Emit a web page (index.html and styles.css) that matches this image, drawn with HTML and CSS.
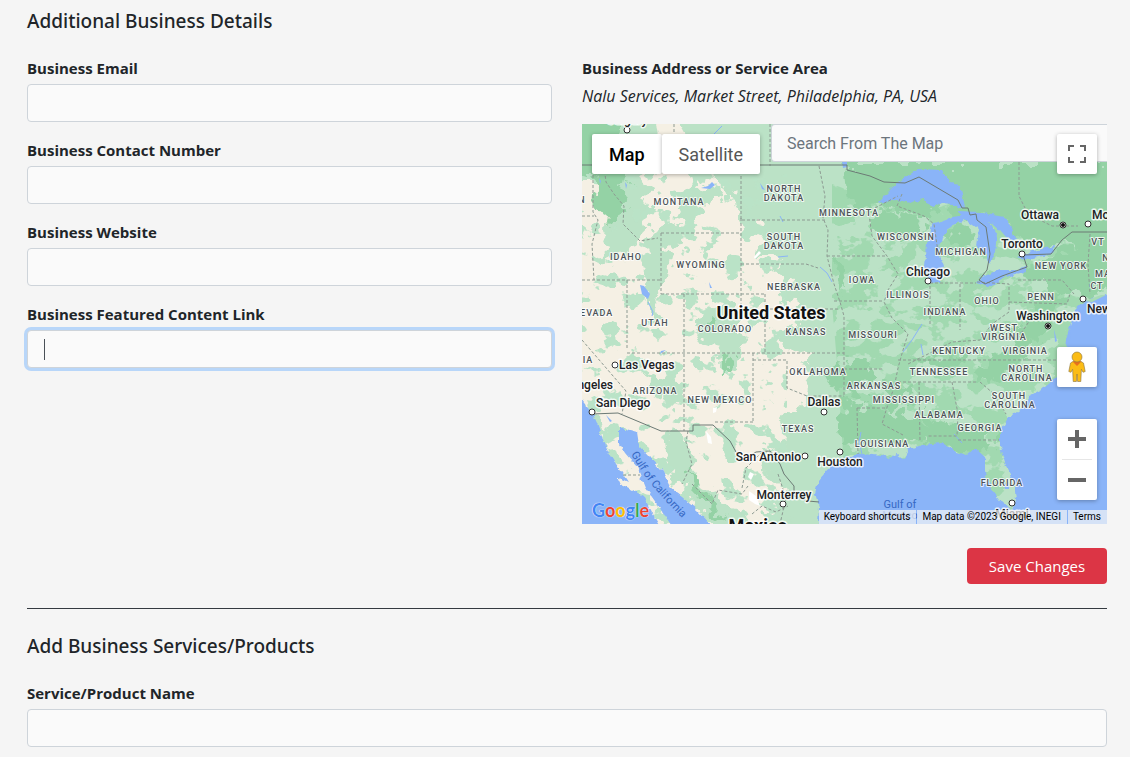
FILE: index.html
```html
<!DOCTYPE html>
<html lang="en">
<head>
    <meta charset="utf-8">
    <meta name="viewport" content="width=device-width, initial-scale=1">
    <title>Business Details</title>
    <link rel="stylesheet" href="styles.css">
</head>
<body>
    <main class="page">
        <form class="details-form">
            <h2>Additional Business Details</h2>

            <div class="columns">
                <div class="column">
                    <div class="form-group">
                        <label for="businessEmail">Business Email</label>
                        <input type="email" id="businessEmail" class="form-control">
                    </div>
                    <div class="form-group">
                        <label for="businessNumber">Business Contact Number</label>
                        <input type="tel" id="businessNumber" class="form-control">
                    </div>
                    <div class="form-group">
                        <label for="businessWebsite">Business Website</label>
                        <input type="url" id="businessWebsite" class="form-control">
                    </div>
                    <div class="form-group">
                        <label for="businessLink">Business Featured Content Link</label>
                        <input type="url" id="businessLink" class="form-control active">
                    </div>
                </div>

                <div class="column">
                    <label for="mapSearch">Business Address or Service Area</label>
                    <p class="address">Nalu Services, Market Street, Philadelphia, PA, USA</p>

                    <div class="map">
                        <svg class="map-canvas" viewBox="0 0 525 400" preserveAspectRatio="xMidYMid slice" role="img" aria-label="Map of the United States">
                            <defs>
                                <filter id="rough" x="-5%" y="-5%" width="110%" height="110%">
                                    <feTurbulence type="fractalNoise" baseFrequency="0.07" numOctaves="3" seed="4"/>
                                    <feDisplacementMap in="SourceGraphic" scale="30" xChannelSelector="R" yChannelSelector="G"/>
                                </filter>
                                <filter id="coast" x="-5%" y="-5%" width="110%" height="110%">
                                    <feTurbulence type="fractalNoise" baseFrequency="0.15" numOctaves="2" seed="8"/>
                                    <feDisplacementMap in="SourceGraphic" scale="6" xChannelSelector="R" yChannelSelector="G"/>
                                </filter>
                                <!-- patches of forest -->
                                <filter id="patches" x="0" y="0" width="100%" height="100%" color-interpolation-filters="sRGB">
                                    <feTurbulence type="fractalNoise" baseFrequency="0.045 0.06" numOctaves="4" seed="11"/>
                                    <feColorMatrix values="0 0 0 0 0.63  0 0 0 0 0.85  0 0 0 0 0.69  24 0 0 0 -11.5"/>
                                    <feComposite in2="SourceGraphic" operator="in"/>
                                </filter>
                                <filter id="scrub" x="0" y="0" width="100%" height="100%" color-interpolation-filters="sRGB">
                                    <feTurbulence type="fractalNoise" baseFrequency="0.05 0.06" numOctaves="4" seed="23"/>
                                    <feColorMatrix values="0 0 0 0 0.73  0 0 0 0 0.89  0 0 0 0 0.78  26 0 0 0 -15"/>
                                    <feComposite in2="SourceGraphic" operator="in"/>
                                </filter>
                            </defs>

                            <rect class="land" width="525" height="400"/>

                            <!-- forest -->
                            <path filter="url(#patches)" d="M250 60L330 90 525 38V400H330L262 345 256 250 250 180Z"/>
                            <g class="forest" filter="url(#rough)">
                                <path d="M262 38H540V128L480 120 450 128 430 100 380 90 350 86 330 92 300 82 268 84Z"/>
                                <path d="M-10 -10H34L32 20 24 44 34 66 40 84 28 104 16 88 14 60-10 44Z"/>
                                <path d="M446 142L485 126 540 108V168L500 172 460 165Z"/>
                                <path d="M280 90L300 84 340 98 338 112 320 110 300 112Z"/>
                                <path d="M366 112L376 100 390 106 394 120 380 126Z"/>
                                <path d="M395 250L440 205 462 170 480 170 470 200 440 232 410 262Z"/>
                                <path d="M252 242L282 236 292 250 270 266 248 260Z"/>
                                <path d="M262 278L285 284 330 292 350 308 340 318 300 320 262 322 256 300Z"/>
                                <path d="M340 285L362 300 400 305 416 316 410 328 380 326 345 318Z"/>
                                <path d="M300 256L330 262 326 282 304 286Z"/>
                                <path d="M330 236L372 226 392 236 360 246Z"/>
                                <path d="M254 136L264 142 268 162 256 168Z"/>
                            </g>

                            <!-- dry land -->
                            <path class="desert" filter="url(#rough)" d="M-10 56L14 62 22 92 30 116 46 118 62 100 72 84 62 62 66 48 84 42 128 54 152 72 160 98 182 106 172 128 196 144 214 158 192 166 214 178 218 196 196 214 206 226 234 230 220 250 224 270 216 286 198 300 204 316 184 322 196 340 186 352 200 364 190 378 182 410H-10Z"/>
                            <path class="desert" filter="url(#coast)" d="M74 -2H96L104 12 90 20 76 14Z"/>
                            <path filter="url(#scrub)" d="M0 50H205V400H0Z"/>

                            <!-- mountain ranges -->
                            <g class="range" filter="url(#rough)">
                                <path d="M72 104L100 98 98 114 86 130 84 154 72 178 76 196 66 200 66 160 60 140Z"/>
                                <path d="M118 186L140 178 156 188 154 208 166 212 164 230 140 250 134 222 112 206Z"/>
                                <path d="M22 100L56 98 60 84 66 112 50 118 40 134 24 132Z"/>
                                <path d="M82 314L102 308 108 324 112 352 130 366 150 380 166 402H134L118 388 106 372 96 350 84 336Z"/>
                                <path d="M180 330L196 324 200 344 186 350Z"/>
                                <path d="M196 366L212 362 222 376 214 400H196Z"/>
                                <path d="M104 66L128 62 138 76 122 82 108 92 94 90Z"/>
                                <path d="M58 254L84 248 104 272 112 278 92 282 78 270Z"/>
                                <path d="M-8 272L12 286 24 310 18 314-8 290Z"/>
                            </g>
                            <g class="forest" filter="url(#rough)">
                                <path d="M14 50L34 46 46 62 42 90 24 100 12 84Z"/>
                                <path d="M140 232L148 230 144 248 140 248Z"/>
                                <path d="M106 350L116 354 134 380 146 396 134 392 114 370Z"/>
                                <path d="M128 196L138 204 134 210 124 204Z"/>
                                <path d="M266 262L280 258 284 270 268 274Z"/>
                            </g>
                            <path class="salt" d="M172 133l5-6 2 2-6 6zM124 307l5 6 1 7-4-1zM131 284l4-1-1 5-3 1zM168 348l4 2-3 6-3-3zM167 367l7 5 4 10-5-2-6-4z"/>

                            <!-- oceans and lakes -->
                            <g class="water" filter="url(#coast)">
                                <path d="M-8 268L0 275 10 288 15 299 20 313 27 329 38 346 46 358 35 353 38 360 50 366 62 373 70 389 82 410H-8Z"/>
                                <path d="M37 303L55 308 57 321 68 333 80 346 88 363 100 373 115 386 136 408H94L77 383 63 363 55 343 43 329 37 319Z"/>
                                <path d="M245 346L260 334 280 329 300 331 307 334 315 331 322 336 325 326 340 321 360 319 372 327 385 331 393 324 403 333 403 349 410 366 420 379 430 386 434 376 432 356 423 339 418 323 418 309 427 293 442 283 448 271 463 263 475 253 477 236 484 224 486 208 490 196 493 186 502 178 540 164V410H235L237 383 233 369 237 356Z"/>
                                <path d="M295 79L310 64 323 53 337 45 360 46 368 59 378 61 383 84 370 80 360 79 350 84 340 74 328 79 315 76Z"/>
                                <path d="M349 100L370 93 384 91 380 98 367 103 360 113 357 129 362 143 358 158 348 159 343 143 345 119Z"/>
                                <path d="M374 88L400 89 422 93 430 104 434 115 423 113 413 101 407 98 415 109 413 129 408 140 403 129 395 123 397 106 383 96Z"/>
                                <path d="M394 159L398 154 417 146 435 146 446 141 442 148 427 152 407 163Z"/>
                                <path d="M435 133L447 128 473 122 470 130 443 136Z"/>
                            </g>
                            <path class="water" d="M58 161l4 1 6 8-2 5-6-5zM119 64l7-2 4-4 3 3-5 4zM260 37h5v6l-4 1zM17 54l2 3-1 3zM43 58l2 3-1 4zM127 158l3 6-2 0zM178 59l5 7-3-1zM484 215l4-9 1 8-4 9zM422 360l5-1v6h-4zM472 205l3 12-2 1zM24 291l6 6-2 1zM79 227l5-1-6 4zM285 16l8 4-6 3z"/>
                            <path class="long-island" d="M503 177l16-6 5 0-14 7z"/>
                            <path class="river" d="M238 143l7 6 5 9M280 330l-3-12 2-10M340 200l-10 16-9 12M341 231l-2-11M198 92l3 6M196 133l10-1M66 178l5 10-1 4M132 10l8-8M372 310l8 9"/>

                            <!-- state lines -->
                            <path class="state-line" d="M159 42V96H244M159 94V180M79 109H159M79 109V170M79 170H183M159 140H224L236 144M102 170V307M45 156H79M45 156V225M0 156H45M45 229H262M171 229V298M171 236H205V264L225 272 262 272M183 170V229M183 185H258M171 298H131M11 41V88L16 96 10 120 12 156M0 92H12M22 42L24 58 32 70 42 82 41 100 58 117 76 114M237 42L243 72 241 94 246 106 245 132 252 160 258 178 262 192 262 272M245 132H305M252 177H300M300 245H262M0 216L44 267 40 290M188 0V42M92 0V42M287 90L290 112 305 132 316 150 306 166 302 178 310 194 326 210 321 226 316 244 312 264 306 280 300 300 321 311M348 159H394M348 162V200M378 160V206M395 158L427 160 427 188 410 200 398 216 370 218 326 240M316 236H477M316 258H396M337 258L338 318M370 258L376 290 375 312H346M398 258L412 270 424 290M376 316H417M427 178L485 180 488 170M420 216L440 208 452 190 476 190M436 156H480L492 170M508 110L506 140 508 170M437 38V72L446 90 470 102 496 102M293 84L316 72M320 70L315 82 342 92 352 100 356 128M275 284H303M275 284L276 330M106 307L104 318 110 340 100 360M110 360L130 380 136 366 160 370 166 362M180 328L164 344 160 364M41 351H58M170 390l10-8 14 6 12-6M196 350l8 24-6 26"/>
                            <!-- country borders -->
                            <path class="border-line" d="M0 41H265V46L288 52 302 58 323 59 337 53 376 76 380 84 386 84 388 91 394 90 395 96 404 103 408 130 405 146 397 156 403 160 420 152 445 143 441 131 469 130 480 116 490 108H525M10 290L36 289 79 307H111V301H131L148 317 154 328 160 336M160 336L174 328 188 327 198 340 202 350 212 362 212 372 226 377 237 378"/>

                            <g class="label-state">
                                <text x="97" y="81">MONTANA</text>
                                <text x="202" y="68">NORTH</text>
                                <text x="202" y="77">DAKOTA</text>
                                <text x="267" y="92">MINNESOTA</text>
                                <text x="202" y="116">SOUTH</text>
                                <text x="202" y="125">DAKOTA</text>
                                <text x="44" y="136">IDAHO</text>
                                <text x="119" y="144">WYOMING</text>
                                <text x="212" y="166">NEBRASKA</text>
                                <text x="324" y="116">WISCONSIN</text>
                                <text x="379" y="131">MICHIGAN</text>
                                <text x="280" y="159">IOWA</text>
                                <text x="326" y="174">ILLINOIS</text>
                                <text x="405" y="180">OHIO</text>
                                <text x="363" y="191">INDIANA</text>
                                <text x="479" y="145">NEW YORK</text>
                                <text x="459" y="176">PENN</text>
                                <text x="516" y="121">VT</text>
                                <text x="524" y="137">N</text>
                                <text x="521" y="153">MA</text>
                                <text x="515" y="165">CT</text>
                                <text x="0" y="79">N</text>
                                <text x="11" y="192">NEVADA</text>
                                <text x="73" y="202">UTAH</text>
                                <text x="143" y="208">COLORADO</text>
                                <text x="224" y="211">KANSAS</text>
                                <text x="291" y="214">MISSOURI</text>
                                <text x="422" y="207">WEST</text>
                                <text x="422" y="216">VIRGINIA</text>
                                <text x="377" y="230">KENTUCKY</text>
                                <text x="443" y="230">VIRGINIA</text>
                                <text x="6" y="239">IA</text>
                                <text x="73" y="270">ARIZONA</text>
                                <text x="138" y="279">NEW MEXICO</text>
                                <text x="236" y="251">OKLAHOMA</text>
                                <text x="357" y="251">TENNESSEE</text>
                                <text x="292" y="265">ARKANSAS</text>
                                <text x="322" y="279">MISSISSIPPI</text>
                                <text x="444" y="248">NORTH</text>
                                <text x="445" y="257">CAROLINA</text>
                                <text x="427" y="275">SOUTH</text>
                                <text x="428" y="284">CAROLINA</text>
                                <text x="357" y="294">ALABAMA</text>
                                <text x="398" y="307">GEORGIA</text>
                                <text x="216" y="308">TEXAS</text>
                                <text x="300" y="323">LOUISIANA</text>
                                <text x="420" y="362">FLORIDA</text>
                            </g>

                            <g class="city-dot">
                                <circle cx="45" cy="6" r="3"/>
                                <circle cx="506" cy="100" r="3"/>
                                <circle cx="440" cy="130" r="3"/>
                                <circle cx="346" cy="157" r="3"/>
                                <circle cx="501" cy="175" r="3"/>
                                <circle cx="33" cy="241" r="3"/>
                                <circle cx="10" cy="288" r="3"/>
                                <circle cx="242" cy="288" r="3"/>
                                <circle cx="223" cy="332" r="3"/>
                                <circle cx="258" cy="328" r="3"/>
                                <circle cx="201" cy="380" r="3"/>
                                <circle cx="430" cy="379" r="3"/>
                                <circle cx="481" cy="101" r="3"/>
                                <circle cx="466" cy="202" r="3"/>
                            </g>
                            <g class="capital-dot">
                                <circle cx="481" cy="101" r="2"/>
                                <circle cx="466" cy="202" r="2"/>
                            </g>

                            <g class="label-city">
                                <text x="45" y="0">Calgary</text>
                                <text x="458" y="95">Ottawa</text>
                                <text x="440" y="124">Toronto</text>
                                <text x="346" y="152">Chicago</text>
                                <text x="466" y="196">Washington</text>
                                <text x="242" y="282">Dallas</text>
                                <text x="258" y="342">Houston</text>
                                <text x="202" y="375">Monterrey</text>
                                <text x="430" y="394">Miami</text>
                                <text class="start" x="510" y="95">Montreal</text>
                                <text class="start" x="505" y="189">New York</text>
                                <text class="start" x="37" y="245">Las Vegas</text>
                                <text class="start" x="14" y="283">San Diego</text>
                                <text class="end" x="31" y="265">Los Angeles</text>
                                <text class="end" x="219" y="337">San Antonio</text>
                            </g>
                            <g class="label-country">
                                <text x="189" y="195">United States</text>
                                <text x="176" y="408">Mexico</text>
                            </g>
                            <g class="label-water">
                                <text x="318" y="384">Gulf of</text>
                                <text x="318" y="395">Mexico</text>
                                <path id="gulfLine" fill="none" d="M49 330Q60 350 74 366T110 404"/>
                                <text><textPath href="#gulfLine">Gulf of California</textPath></text>
                            </g>
                        </svg>

                        <div class="map-types">
                            <button type="button" class="selected">Map</button>
                            <button type="button">Satellite</button>
                        </div>

                        <input type="text" id="mapSearch" class="form-control map-search" placeholder="Search From The Map">

                        <button type="button" class="map-button fullscreen" aria-label="Toggle fullscreen view">
                            <svg width="18" height="18" viewBox="0 0 18 18"><path d="M0 0v6h2V2h4V0H0zm16 0h-4v2h4v4h2V0h-2zm0 16h-4v2h6v-6h-2v4zM2 12H0v6h6v-2H2v-4z"/></svg>
                        </button>

                        <button type="button" class="map-button pegman" aria-label="Open Street View">
                            <svg width="18" height="32" viewBox="0 0 18 32">
                                <path class="pegman-body" d="M5 10.500L2.500 12 .8 20.500l2.200.8 1.600-3L5.200 30.500h3.200L9 23l.6 7.500h3.200l.6-12.200 1.600 3 2.200-.8L15.500 12 13 10.500z"/>
                                <path class="pegman-neck" d="M4.500 10.500h9L9 15z"/>
                                <circle class="pegman-head" cx="9" cy="6" r="5"/>
                            </svg>
                        </button>

                        <div class="map-zoom">
                            <button type="button" aria-label="Zoom in">
                                <svg width="18" height="18" viewBox="0 0 18 18"><path d="M18 7h-7V0H7v7H0v4h7v7h4v-7h7z"/></svg>
                            </button>
                            <button type="button" aria-label="Zoom out">
                                <svg width="18" height="18" viewBox="0 0 18 18"><path d="M0 7h18v4H0z"/></svg>
                            </button>
                        </div>

                        <a href="#" class="google-logo" aria-label="Google"><span class="blue">G</span><span class="red">o</span><span class="yellow">o</span><span class="blue">g</span><span class="green">l</span><span class="red">e</span></a>

                        <div class="map-credits">
                            <button type="button">Keyboard shortcuts</button>
                            <span>Map data ©2023 Google, INEGI</span>
                            <a href="#">Terms</a>
                        </div>
                    </div>
                </div>
            </div>

            <div class="form-actions">
                <button type="submit" class="btn-save">Save Changes</button>
            </div>
        </form>

        <hr>

        <form class="services-form">
            <h2>Add Business Services/Products</h2>
            <div class="form-group">
                <label for="serviceName">Service/Product Name</label>
                <input type="text" id="serviceName" class="form-control">
            </div>
        </form>
    </main>
</body>
</html>
```
FILE: styles.css
```css
* {
    box-sizing: border-box;
}

body {
    background-color: #f5f5f5;
    color: #212529;
    font-family: 'Segoe UI', 'Open Sans', 'Noto Sans', sans-serif;
    font-size: 16px;
    line-height: 24px;
    margin: 0;
}

.page {
    padding: 8px 23px 0 27px;
}

h2 {
    font-family: 'Segoe UI', 'Noto Sans', sans-serif;
    font-size: 19px;
    font-weight: 500;
    line-height: 26px;
    margin: 0 0 22px;
}

label {
    display: block;
    font-size: 15px;
    font-weight: 700;
    margin-bottom: 4px;
}

hr {
    border: none;
    border-top: 1px solid #343a40;
    margin: 24px 0;
}

/* Form */
.columns {
    display: grid;
    grid-template-columns: 1fr 1fr;
    gap: 30px;
}

.form-group {
    margin-bottom: 16px;
}

.form-control {
    display: block;
    width: 100%;
    height: 38px;
    padding: 6px 15px;
    border: 1px solid #ced4da;
    border-radius: 4px;
    background-color: #fafafa;
    color: #495057;
    font-family: inherit;
    font-size: 16px;
    outline: none;
}

.form-control:focus,
.form-control.active {
    box-shadow: 0 0 0 3px #b8d6f9;
}

/* text cursor of the field being edited */
.form-control.active:not(:focus) {
    background-image: linear-gradient(#495057, #495057);
    background-repeat: no-repeat;
    background-size: 1px 21px;
    background-position: 16px center;
}

.address {
    font-size: 16px;
    font-style: italic;
    margin: 0 0 16px;
}

.form-actions {
    display: flex;
    justify-content: flex-end;
    margin-top: 24px;
}

.btn-save {
    background-color: #dc3545;
    color: #ffffff;
    border: none;
    border-radius: 4px;
    padding: 6px 20px;
    min-width: 140px;
    font-family: inherit;
    font-size: 15px;
    line-height: 24px;
    cursor: pointer;
}

.btn-save:hover {
    background-color: #c82333;
}

/* Map */
.map {
    position: relative;
    height: 400px;
    overflow: hidden;
    font-family: Roboto, Arial, sans-serif;
}

.map-canvas {
    display: block;
    width: 100%;
    height: 100%;
}

.land,
.range {
    fill: #bbe2c6;
}

.forest {
    fill: #94d2a5;
}

.desert {
    fill: #f5f0e4;
}

.salt {
    fill: #ffffff;
}

.water {
    fill: #8ab4f8;
}

.long-island {
    fill: #a8dab5;
}

.river {
    fill: none;
    stroke: #8ab4f8;
}

.state-line {
    fill: none;
    stroke: #8d9a92;
    stroke-dasharray: 3 2;
}

.border-line {
    fill: none;
    stroke: #6c7a75;
}

.label-state,
.label-city,
.label-country {
    text-anchor: middle;
    paint-order: stroke;
    stroke: #ffffff;
    stroke-linejoin: round;
    stroke-opacity: 0.8;
}

.label-state {
    fill: #4d5357;
    font-size: 9px;
    font-weight: 500;
    letter-spacing: 1px;
    stroke-width: 2px;
}

.label-city {
    fill: #202124;
    font-size: 12px;
    font-weight: 500;
    stroke-width: 3px;
}

.label-country {
    fill: #111111;
    font-size: 18px;
    font-weight: 700;
    stroke-width: 3px;
}

.label-water {
    fill: #3668c4;
    font-size: 11px;
}

.label-water text {
    text-anchor: middle;
}

.label-water textPath {
    text-anchor: start;
}

.start {
    text-anchor: start;
}

.end {
    text-anchor: end;
}

.city-dot {
    fill: #ffffff;
    stroke: #333333;
}

.capital-dot {
    fill: #111111;
}

/* Map controls */
.map button {
    background-color: #ffffff;
    border: none;
    padding: 0;
    font-family: inherit;
    cursor: pointer;
}

.map button path {
    fill: #666666;
}

.map-types {
    position: absolute;
    top: 10px;
    left: 10px;
    display: flex;
}

.map .map-types button {
    height: 40px;
    padding: 0 17px;
    border-radius: 2px;
    box-shadow: 0 1px 4px rgba(0, 0, 0, 0.3);
    color: #565656;
    font-size: 18px;
}

.map .map-types .selected {
    color: #000000;
    font-weight: 500;
}

.map-search {
    position: absolute;
    top: 0;
    left: 189px;
    right: 0;
    width: auto;
    border-radius: 4px 0 0 4px;
    border-right: none;
}

.map-search::placeholder {
    color: #6c757d;
    opacity: 1;
}

.map-button,
.map-zoom {
    position: absolute;
    right: 10px;
    width: 40px;
    border-radius: 2px;
    box-shadow: 0 1px 4px rgba(0, 0, 0, 0.3);
}

.map-button {
    display: flex;
    align-items: center;
    justify-content: center;
    height: 40px;
}

.fullscreen {
    top: 10px;
}

.pegman {
    bottom: 137px;
}

.map .pegman-body,
.map .pegman-head {
    fill: #fbbc16;
    stroke: #8a7440;
    stroke-width: 0.6px;
}

.map .pegman-neck {
    fill: #e8711c;
}

.map-zoom {
    bottom: 24px;
    padding: 0 5px;
    background-color: #ffffff;
}

.map-zoom button {
    display: flex;
    align-items: center;
    justify-content: center;
    width: 100%;
    height: 40px;
}

.map-zoom button + button {
    height: 41px;
    border-top: 1px solid #e6e6e6;
}

.google-logo {
    position: absolute;
    left: 10px;
    bottom: 2px;
    font-family: Lato, sans-serif;
    font-size: 18px;
    line-height: 24px;
    font-weight: 700;
    text-decoration: none;
    text-shadow: 0 0 1px #ffffff, 0 0 1px #ffffff;
}

.blue {
    color: #4285f4;
}

.red {
    color: #ea4335;
}

.yellow {
    color: #fbbc05;
}

.green {
    color: #34a853;
}

.map-credits {
    position: absolute;
    right: 0;
    bottom: 0;
    display: flex;
    gap: 1px;
    font-size: 10px;
    line-height: 14px;
}

.map .map-credits > * {
    background-color: rgba(245, 245, 245, 0.7);
    color: #000000;
    font-size: 10px;
    line-height: 14px;
    padding: 0 6px 0 5px;
    text-decoration: none;
}

@media (max-width: 767px) {
    .columns {
        grid-template-columns: 1fr;
    }
}
```
